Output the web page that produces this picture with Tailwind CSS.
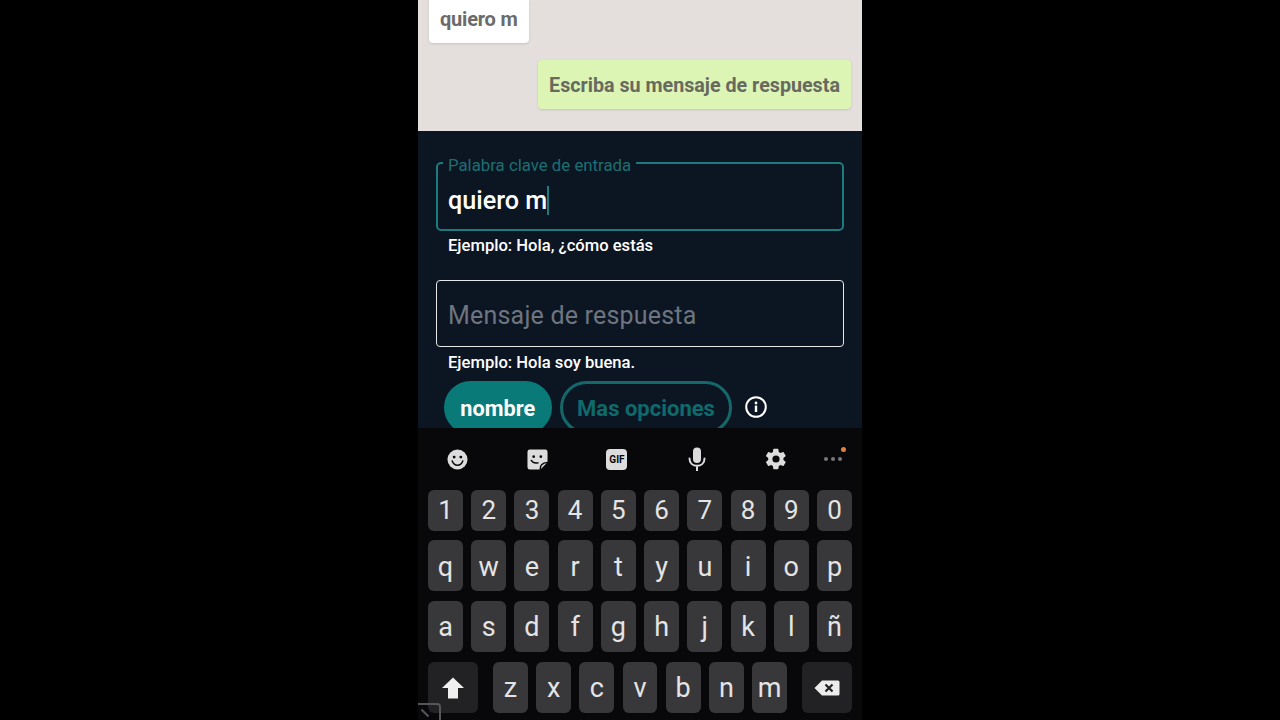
<!DOCTYPE html>
<html lang="es">
<head>
    <meta charset="UTF-8">
    <title>Respuesta automática</title>
    <script src="https://cdn.jsdelivr.net/npm/@tailwindcss/browser@4"></script>
</head>
<body class="bg-black overflow-hidden font-['Roboto',sans-serif]">
    <div class="relative w-[444px] h-[720px] ml-[418px] overflow-hidden">
        <!-- Chat preview -->
        <section class="h-[131px] bg-[#e4dedc] flex flex-col overflow-hidden">
            <div class="self-start ml-[11px] w-[100px] h-[43px] pl-[11px] pt-[7px] bg-white rounded-b-sm shadow-sm text-[#6b6b6b] text-[20px] leading-[24px] font-bold tracking-[-0.2px]">quiero m</div>
            <div class="self-end mt-[17px] mr-[11px] w-[313px] h-[49px] bg-[#dcf5b5] rounded-sm shadow-sm text-[#68695f] text-[19.7px] leading-[51px] font-bold text-center whitespace-nowrap">Escriba su mensaje de respuesta</div>
        </section>

        <!-- Form -->
        <section class="h-[297px] bg-[#0c1623] px-[18px] pt-[31px] overflow-hidden">
            <div class="relative h-[69px] border-[2.5px] border-[#1d7b7d] rounded-[5px] pl-[10px] pt-[20.5px]">
                <span class="absolute -top-[8px] left-[5px] bg-[#0c1623] px-[5px] text-[#1d6f72] text-[16.8px] leading-[18px] whitespace-nowrap">Palabra clave de entrada</span>
                <div class="flex items-center h-[31px] text-white text-[25.2px] leading-[31px] font-medium">quiero m<span class="w-[2px] h-[29px] bg-[#1d7b7d]"></span></div>
            </div>
            <p class="ml-[12px] mt-[5px] text-white text-[16.6px] leading-[20px] font-medium">Ejemplo: Hola, ¿cómo estás</p>
            <div class="mt-[24px] h-[67px] border border-[#e6e8ea] rounded-[4px] pl-[11px] text-[#6e7580] text-[25px] leading-[70px] tracking-[0.2px]">Mensaje de respuesta</div>
            <p class="ml-[12px] mt-[6px] text-white text-[16.6px] leading-[20px] font-medium">Ejemplo: Hola soy buena.</p>
            <div class="flex items-center ml-[7.5px] mt-[8px]">
                <div class="w-[108.5px] h-[53px] rounded-full bg-[#0a7a78] text-white text-[21.7px] leading-[55px] font-bold text-center">nombre</div>
                <div class="ml-[8px] w-[172px] h-[53px] rounded-full border-[3px] border-[#14686a] text-[#0f6a6b] text-[22px] leading-[49px] font-bold text-center">Mas opciones</div>
                <svg class="ml-[12px] -mt-[1px] w-[24px] h-[24px]" viewBox="0 0 24 24" fill="none">
                    <circle cx="12" cy="12" r="9.8" stroke="white" stroke-width="2"/>
                    <rect x="10.8" y="10.6" width="2.4" height="6.4" fill="white"/>
                    <circle cx="12" cy="8" r="1.4" fill="white"/>
                </svg>
            </div>
        </section>

        <!-- Keyboard -->
        <section class="h-[292px] bg-[#08080a] px-[10px]">
            <div class="flex items-center h-[62px] -ml-[10px] text-[#dcdcdc]">
                <div class="w-[79.6px] flex justify-center">
                    <svg class="w-[21px] h-[21px]" viewBox="0 0 22 22">
                        <circle cx="11" cy="11" r="10.5" fill="#dcdcdc"/>
                        <circle cx="7.5" cy="8.5" r="1.5" fill="#08080a"/>
                        <circle cx="14.5" cy="8.5" r="1.5" fill="#08080a"/>
                        <path d="M5.5 12.5c1 3 3 4.5 5.5 4.5s4.5-1.500 5.500-4.500" fill="none" stroke="#08080a" stroke-width="1.6" stroke-linecap="round"/>
                    </svg>
                </div>
                <div class="w-[79.6px] flex justify-center">
                    <svg class="w-[21px] h-[21px]" viewBox="0 0 22 22">
                        <path d="M3 .5h16a2.5 2.5 0 0 1 2.5 2.5v11l-7.500 7.500h-11a2.5 2.5 0 0 1-2.500-2.500v-16a2.5 2.5 0 0 1 2.500-2.500z" fill="#dcdcdc"/>
                        <circle cx="7" cy="8" r="1.4" fill="#08080a"/>
                        <circle cx="14.5" cy="8" r="1.4" fill="#08080a"/>
                        <path d="M4.5 12c1.500 2.500 4 3.200 7 2.500M14 21.500c-.5-4 1.500-7 7.500-7.500" fill="none" stroke="#08080a" stroke-width="1.5" stroke-linecap="round"/>
                    </svg>
                </div>
                <div class="w-[79.6px] flex justify-center">
                    <div class="w-[21px] h-[21px] rounded-[4px] bg-[#dcdcdc] text-[#08080a] text-[10px] leading-[21px] font-bold text-center">GIF</div>
                </div>
                <div class="w-[79.6px] flex justify-center">
                    <svg class="w-[18px] h-[24px]" viewBox="0 0 18 24">
                        <rect x="5" y=".5" width="8" height="15.5" rx="4" fill="#dcdcdc"/>
                        <path d="M1.5 11.5c0 4.500 3.200 7.300 7.500 7.300s7.500-2.800 7.500-7.300M9 19v5" fill="none" stroke="#dcdcdc" stroke-width="2" stroke-linecap="round"/>
                    </svg>
                </div>
                <div class="w-[79.6px] flex justify-center">
                    <svg class="w-[24px] h-[24px]" viewBox="0 0 24 24">
                        <path fill="#dcdcdc" fill-rule="evenodd" d="M19.4 13c.04-.33.06-.66.06-1s-.02-.67-.06-1l2.150-1.680c.2-.150.25-.430.120-.650l-2.040-3.530c-.120-.220-.390-.310-.620-.220l-2.540 1.020c-.530-.400-1.100-.740-1.720-1l-.380-2.700c-.040-.240-.250-.430-.500-.430h-4.080c-.250 0-.460.190-.500.430l-.380 2.700c-.620.260-1.190.600-1.720 1l-2.540-1.020c-.230-.090-.500 0-.620.220l-2.040 3.530c-.130.220-.080.500.120.650l2.150 1.680c-.04.330-.07.670-.07 1s.03.670.07 1l-2.150 1.680c-.2.150-.25.430-.12.650l2.040 3.530c.12.220.39.310.62.220l2.540-1.020c.53.400 1.100.740 1.720 1l.38 2.700c.04.240.25.430.5.430h4.080c.25 0 .46-.19.5-.43l.38-2.700c.62-.26 1.190-.6 1.720-1l2.540 1.020c.23.090.5 0 .62-.22l2.040-3.530c.13-.22.08-.5-.12-.65zM12 15.600a3.600 3.600 0 1 1 0-7.200 3.600 3.600 0 0 1 0 7.200z"/>
                    </svg>
                </div>
                <div class="relative flex gap-[3px] ml-[8px] w-[19px]">
                    <span class="w-[4px] h-[4px] rounded-full bg-[#77777a]"></span>
                    <span class="w-[4px] h-[4px] rounded-full bg-[#77777a]"></span>
                    <span class="w-[4px] h-[4px] rounded-full bg-[#77777a]"></span>
                    <span class="absolute -top-[10px] left-[17px] w-[5px] h-[5px] rounded-full bg-[#e57f3d]"></span>
                </div>
            </div>

            <div class="grid grid-cols-10 gap-x-[8.2px] text-[#e4e4e4] text-[26px] text-center">
                <div class="h-[41px] rounded-[6px] bg-[#38383a] leading-[41px]">1</div>
                <div class="h-[41px] rounded-[6px] bg-[#38383a] leading-[41px]">2</div>
                <div class="h-[41px] rounded-[6px] bg-[#38383a] leading-[41px]">3</div>
                <div class="h-[41px] rounded-[6px] bg-[#38383a] leading-[41px]">4</div>
                <div class="h-[41px] rounded-[6px] bg-[#38383a] leading-[41px]">5</div>
                <div class="h-[41px] rounded-[6px] bg-[#38383a] leading-[41px]">6</div>
                <div class="h-[41px] rounded-[6px] bg-[#38383a] leading-[41px]">7</div>
                <div class="h-[41px] rounded-[6px] bg-[#38383a] leading-[41px]">8</div>
                <div class="h-[41px] rounded-[6px] bg-[#38383a] leading-[41px]">9</div>
                <div class="h-[41px] rounded-[6px] bg-[#38383a] leading-[41px]">0</div>
            </div>
            <div class="mt-[9px] grid grid-cols-10 gap-x-[8.2px] text-[#e4e4e4] text-[27px] text-center">
                <div class="h-[51px] rounded-[6px] bg-[#38383a] leading-[54px]">q</div>
                <div class="h-[51px] rounded-[6px] bg-[#38383a] leading-[54px]">w</div>
                <div class="h-[51px] rounded-[6px] bg-[#38383a] leading-[54px]">e</div>
                <div class="h-[51px] rounded-[6px] bg-[#38383a] leading-[54px]">r</div>
                <div class="h-[51px] rounded-[6px] bg-[#38383a] leading-[54px]">t</div>
                <div class="h-[51px] rounded-[6px] bg-[#38383a] leading-[54px]">y</div>
                <div class="h-[51px] rounded-[6px] bg-[#38383a] leading-[54px]">u</div>
                <div class="h-[51px] rounded-[6px] bg-[#38383a] leading-[54px]">i</div>
                <div class="h-[51px] rounded-[6px] bg-[#38383a] leading-[54px]">o</div>
                <div class="h-[51px] rounded-[6px] bg-[#38383a] leading-[54px]">p</div>
            </div>
            <div class="mt-[10px] grid grid-cols-10 gap-x-[8.2px] text-[#e4e4e4] text-[27px] text-center">
                <div class="h-[51px] rounded-[6px] bg-[#38383a] leading-[53px]">a</div>
                <div class="h-[51px] rounded-[6px] bg-[#38383a] leading-[53px]">s</div>
                <div class="h-[51px] rounded-[6px] bg-[#38383a] leading-[53px]">d</div>
                <div class="h-[51px] rounded-[6px] bg-[#38383a] leading-[53px]">f</div>
                <div class="h-[51px] rounded-[6px] bg-[#38383a] leading-[53px]">g</div>
                <div class="h-[51px] rounded-[6px] bg-[#38383a] leading-[53px]">h</div>
                <div class="h-[51px] rounded-[6px] bg-[#38383a] leading-[53px]">j</div>
                <div class="h-[51px] rounded-[6px] bg-[#38383a] leading-[53px]">k</div>
                <div class="h-[51px] rounded-[6px] bg-[#38383a] leading-[53px]">l</div>
                <div class="h-[51px] rounded-[6px] bg-[#38383a] leading-[53px]">ñ</div>
            </div>
            <div class="mt-[10px] flex text-[#e4e4e4] text-[27px] text-center">
                <div class="w-[50px] h-[51px] rounded-[6px] bg-[#222224] flex items-center justify-center">
                    <svg class="w-[22px] h-[22px]" viewBox="0 0 22 22"><path d="M11 .5L22 11h-6v10.500H6V11H0z" fill="#f0f0f0"/></svg>
                </div>
                <div class="ml-[15px] grid grid-cols-7 gap-x-[8.2px] w-[294px]">
                    <div class="h-[51px] rounded-[6px] bg-[#38383a] leading-[53px]">z</div>
                    <div class="h-[51px] rounded-[6px] bg-[#38383a] leading-[53px]">x</div>
                    <div class="h-[51px] rounded-[6px] bg-[#38383a] leading-[53px]">c</div>
                    <div class="h-[51px] rounded-[6px] bg-[#38383a] leading-[53px]">v</div>
                    <div class="h-[51px] rounded-[6px] bg-[#38383a] leading-[53px]">b</div>
                    <div class="h-[51px] rounded-[6px] bg-[#38383a] leading-[53px]">n</div>
                    <div class="h-[51px] rounded-[6px] bg-[#38383a] leading-[53px]">m</div>
                </div>
                <div class="ml-[15px] w-[50px] h-[51px] rounded-[6px] bg-[#222224] flex items-center justify-center">
                    <svg class="w-[26px] h-[16px]" viewBox="0 0 26 16">
                        <path d="M8 .5h16a1.500 1.500 0 0 1 1.500 1.500v12a1.500 1.500 0 0 1-1.500 1.500h-16L.5 8z" fill="#ececec"/>
                        <path d="M11.5 4.500l7 7M18.500 4.500l-7 7" stroke="#222224" stroke-width="2.2"/>
                    </svg>
                </div>
            </div>
        </section>

        <!-- Small recording overlay in the corner -->
        <div class="absolute left-[-6px] top-[703px] w-[29px] h-[30px] border-2 border-[#55565a] rounded-[4px] overflow-hidden">
            <div class="w-[10px] h-[2px] mt-[7px] ml-[6px] bg-[#55565a] rotate-45"></div>
        </div>
    </div>
</body>
</html>
